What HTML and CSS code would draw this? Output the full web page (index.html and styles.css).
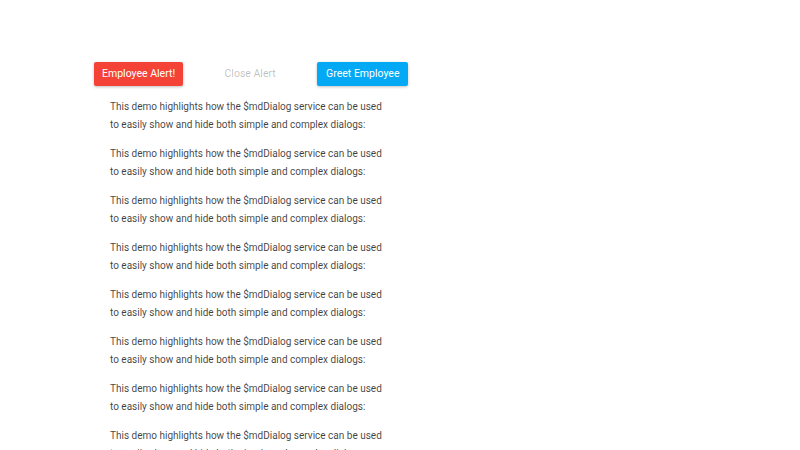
FILE: index.html
```html
<!DOCTYPE html>
<html>
<head>
<meta charset="utf-8">
<link rel="stylesheet" href="styles.css">
</head>
<body>
<div class="page">
  <div class="actions">
    <button class="btn btn-warn">Employee Alert!</button>
    <button class="btn btn-flat" disabled>Close Alert</button>
    <button class="btn btn-primary">Greet Employee</button>
  </div>
  <div class="content">
    <p>This demo highlights how the $mdDialog service can be used<br>to easily show and hide both simple and complex dialogs:</p>
    <p>This demo highlights how the $mdDialog service can be used<br>to easily show and hide both simple and complex dialogs:</p>
    <p>This demo highlights how the $mdDialog service can be used<br>to easily show and hide both simple and complex dialogs:</p>
    <p>This demo highlights how the $mdDialog service can be used<br>to easily show and hide both simple and complex dialogs:</p>
    <p>This demo highlights how the $mdDialog service can be used<br>to easily show and hide both simple and complex dialogs:</p>
    <p>This demo highlights how the $mdDialog service can be used<br>to easily show and hide both simple and complex dialogs:</p>
    <p>This demo highlights how the $mdDialog service can be used<br>to easily show and hide both simple and complex dialogs:</p>
    <p>This demo highlights how the $mdDialog service can be used<br>to easily show and hide both simple and complex dialogs:</p>
  </div>
</div>
</body>
</html>
```
FILE: styles.css
```css
html, body {
  margin: 0;
  padding: 0;
  background: #ffffff;
  font-family: Roboto, "Helvetica Neue", sans-serif;
}
.page {
  padding: 62px 0 0 94px;
}
.actions {
  display: flex;
  align-items: center;
  gap: 12px;
}
.btn {
  font-family: Roboto, sans-serif;
  font-size: 10.5px;
  height: 24px;
  line-height: 24px;
  padding: 0 8px;
  border: none;
  border-radius: 2px;
  cursor: pointer;
}
.btn-warn {
  background: #f44336;
  color: #ffffff;
  box-shadow: 0 1px 3px rgba(0,0,0,0.25);
}
.btn-primary {
  background: #03a9f4;
  color: #ffffff;
  padding: 0 9px;
  box-shadow: 0 1px 3px rgba(0,0,0,0.25);
}
.btn-flat {
  background: transparent;
  color: rgba(0,0,0,0.26);
  width: 110px;
}
.content {
  padding: 0 16px;
  margin-top: 12px;
}
.content p {
  margin: 0 0 11px 0;
  font-size: 10px;
  line-height: 18px;
  color: rgba(0,0,0,0.75);
}
```
